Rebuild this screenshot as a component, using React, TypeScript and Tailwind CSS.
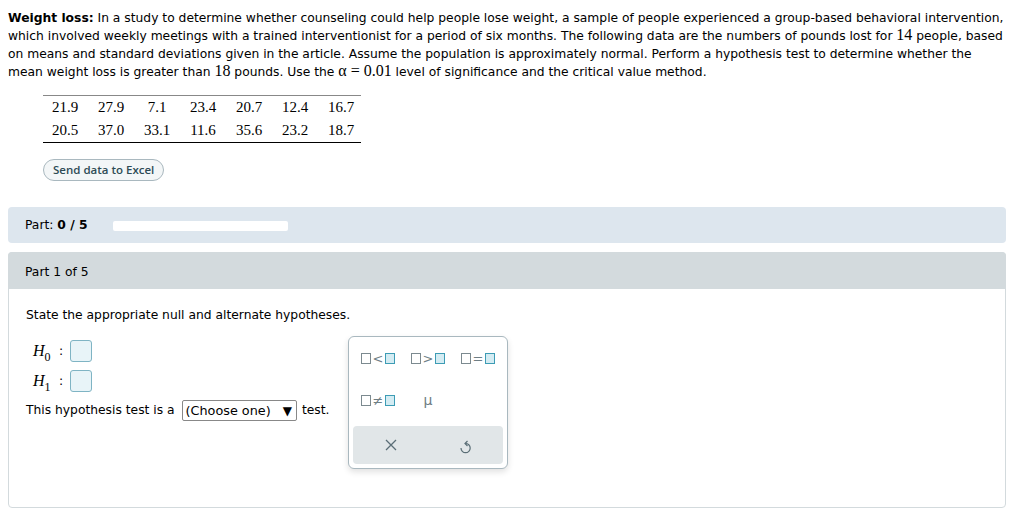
import React from "react";

const verdana = { fontFamily: '"DejaVu Sans", Verdana, sans-serif' };
const serif = { fontFamily: '"Liberation Serif", "Times New Roman", serif' };

function Sq({ filled }: { filled?: boolean }) {
  return (
    <span
      className={
        filled
          ? "inline-block w-[10px] h-[11px] border-[1.5px] border-[#3d9cb5] bg-[#d4ecf3]"
          : "inline-block w-[10px] h-[11px] border-[1.5px] border-[#7c8a90] bg-white"
      }
    />
  );
}

function Op({ sym }: { sym: string }) {
  return (
    <div className="flex items-center justify-center gap-[1px] text-[#6e7e85] text-[13px] leading-none">
      <Sq />
      <span className="px-[1px]" style={{ fontFamily: '"DejaVu Sans", sans-serif' }}>
        {sym}
      </span>
      <Sq filled />
    </div>
  );
}

function Num({ children }: { children: React.ReactNode }) {
  return (
    <span className="text-[16px] leading-none" style={serif}>
      {children}
    </span>
  );
}

function HLabel({ n }: { n: string }) {
  return (
    <div className="flex items-center h-[24px] ml-[7px]">
      <span className="text-[16px] italic w-[22px] leading-none" style={serif}>
        H
        <span className="not-italic text-[12px] relative top-[5px]">{n}</span>
      </span>
      <span className="ml-[4px] mr-[7px]">:</span>
      <span className="inline-block w-[22px] h-[22px] rounded-[3px] border-[1.5px] border-[#7fb4c4] bg-[#e8f4f8]" />
    </div>
  );
}

export default function App() {
  const row1 = ["21.9", "27.9", "7.1", "23.4", "20.7", "12.4", "16.7"];
  const row2 = ["20.5", "37.0", "33.1", "11.6", "35.6", "23.2", "18.7"];
  return (
    <div className="w-[1024px] h-[519px] bg-white text-[#000] overflow-hidden" style={verdana}>
      <div className="px-[8px] pt-[9px] text-[12.3px] leading-[18px] whitespace-nowrap">
        <b>Weight loss:</b> In a study to determine whether counseling could help people lose weight, a sample of people experienced a group-based behavioral intervention,
        <br />
        which involved weekly meetings with a trained interventionist for a period of six months. The following data are the numbers of pounds lost for <Num>14</Num> people, based
        <br />
        on means and standard deviations given in the article. Assume the population is approximately normal. Perform a hypothesis test to determine whether the
        <br />
        mean weight loss is greater than <Num>18</Num> pounds. Use the <Num>α = 0.01</Num> level of significance and the critical value method.
      </div>

      <div className="ml-[43px] mt-[14px] w-[318px] border-t border-[#888] border-b border-b-black" style={serif}>
        <div className="grid grid-cols-[repeat(7,46px)] text-[15px] leading-[23px] -ml-[1px]">
          {row1.map((v, i) => (
            <span key={"a" + i} className="text-center">
              {v}
            </span>
          ))}
          {row2.map((v, i) => (
            <span key={"b" + i} className="text-center">
              {v}
            </span>
          ))}
        </div>
      </div>

      <div className="ml-[43px] mt-[16px] h-[22px] flex">
        <div
          className="inline-flex items-center h-[22px] px-[9px] rounded-full border border-[#a9b8bf] bg-[#f3f6f7] text-[11.5px] font-semibold text-[#2e4b55]"
          style={{ fontFamily: '"Open Sans", sans-serif' }}
        >
          Send data to Excel
        </div>
      </div>

      <div className="mx-[8px] mt-[26px] w-[998px] h-[36px] rounded-[4px] bg-[#dde6ee] flex items-center px-[17px] pt-[1px] text-[12.3px]">
        <span>
          Part: <b>0 / 5</b>
        </span>
        <div className="ml-[25px] w-[175px] h-[10px] bg-white rounded-[2px]" />
      </div>

      <div className="mx-[8px] mt-[9px] w-[998px] h-[256px] rounded-[4px] border border-[#d3dadd] flex flex-col">
        <div className="h-[37px] bg-[#d3dadd] flex items-center px-[17px] pt-[3px] text-[12.3px] -mx-px -mt-px rounded-t-[4px]">
          Part 1 of 5
        </div>
        <div className="flex-1 pl-[17px] pt-[17px] text-[12.3px] flex">
          <div className="w-[322px] shrink-0">
            <div className="leading-[18px] whitespace-nowrap">State the appropriate null and alternate hypotheses.</div>
            <div className="mt-[15px]">
              <HLabel n="0" />
            </div>
            <div className="mt-[6px]">
              <HLabel n="1" />
            </div>
            <div className="mt-[7px] flex items-center gap-[5px] whitespace-nowrap">
              <span className="mr-[2px]">This hypothesis test is a</span>
              <span className="inline-flex items-center h-[21px] pl-[3px] pr-[4px] border border-[#888] rounded-[2px] gap-[12px] text-[12.8px]">
                (Choose one) <span className="text-[12px]">▼</span>
              </span>
              <span>test.</span>
            </div>
          </div>
          <div className="mt-[30px] w-[160px] h-[133px] rounded-[6px] border border-[#a9b8bf] shadow-[0_3px_6px_rgba(0,0,0,0.12)] bg-white flex flex-col p-[4px]">
            <div className="grid grid-cols-3 h-[34px] items-center">
              <Op sym="<" />
              <Op sym=">" />
              <Op sym="=" />
            </div>
            <div className="grid grid-cols-3 h-[51px] items-center">
              <Op sym="≠" />
              <div className="text-center text-[14px] text-[#6e7e85]">μ</div>
              <div />
            </div>
            <div className="flex-1 rounded-[4px] bg-[#e1e6e8] grid grid-cols-2 items-center">
              <div className="flex justify-center">
                <svg width="12" height="12" viewBox="0 0 12 12">
                  <path d="M1 1L11 11M11 1L1 11" stroke="#5a6e76" strokeWidth="1.3" fill="none" />
                </svg>
              </div>
              <div className="flex justify-center">
                <svg width="13" height="17" viewBox="0 0 13 17">
                  <path d="M6.5 6.5A4.6 4.6 0 1 1 2 11" stroke="#5a6e76" strokeWidth="1.2" fill="none" />
                  <path d="M8.5 4L6 6.5L8.5 9" stroke="#5a6e76" strokeWidth="1.2" fill="none" />
                </svg>
              </div>
            </div>
          </div>
        </div>
      </div>
    </div>
  );
}
